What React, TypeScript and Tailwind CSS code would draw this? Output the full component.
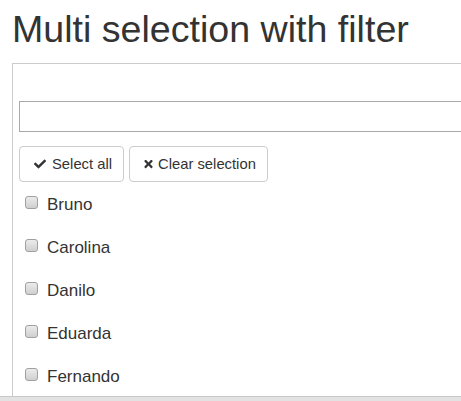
import React from "react";
import { FaCheck, FaTimes } from "react-icons/fa";

const names = ["Bruno", "Carolina", "Danilo", "Eduarda", "Fernando"];

function Box() {
  return (
    <span className="inline-block w-[13px] h-[13px] rounded-[3px] border border-[#a0a0a0] bg-gradient-to-b from-[#ececec] to-[#cfcfcf] shrink-0" />
  );
}

export default function App() {
  return (
    <div
      className="w-[461px] h-[401px] overflow-hidden flex flex-col bg-white text-[#333]"
      style={{ fontFamily: '"Liberation Sans", Arial, sans-serif' }}
    >
      <h1 className="ml-[12px] mt-[9px] text-[37.6px] leading-[41px] font-normal whitespace-nowrap">
        Multi selection with filter
      </h1>
      <div className="mt-[13px] ml-[12px] w-[520px] flex-1 min-h-0 border-l border-t border-[#cccccc] pl-[6px] pt-[37px] overflow-hidden">
        <div className="h-[31px] border border-[#a9a9a9] w-full bg-white" />
        <div className="mt-[14px] flex gap-[5px]">
          <button className="h-[36px] w-[105px] pl-[14px] border border-[#cccccc] rounded-[4px] bg-white flex items-center gap-[6px] text-[14.8px]">
            <FaCheck className="w-[12px] h-[12px] text-[#333]" />
            <span>Select all</span>
          </button>
          <button className="h-[36px] w-[139px] pl-[13px] border border-[#cccccc] rounded-[4px] bg-white flex items-center gap-[4px] text-[14.8px]">
            <FaTimes className="w-[11px] h-[12px] text-[#333]" />
            <span>Clear selection</span>
          </button>
        </div>
        <div className="flex flex-col pt-[1px]">
          {names.map((n) => (
            <div key={n} className="h-[43px] flex items-center gap-[9px] pl-[6px] text-[17px]">
              <span className="-mt-[4px] flex"><Box /></span>
              <span>{n}</span>
            </div>
          ))}
        </div>
      </div>
      <div className="h-[5px] shrink-0 border-t border-[#c8c8c8] bg-[#e2e2e2]" />
    </div>
  );
}
